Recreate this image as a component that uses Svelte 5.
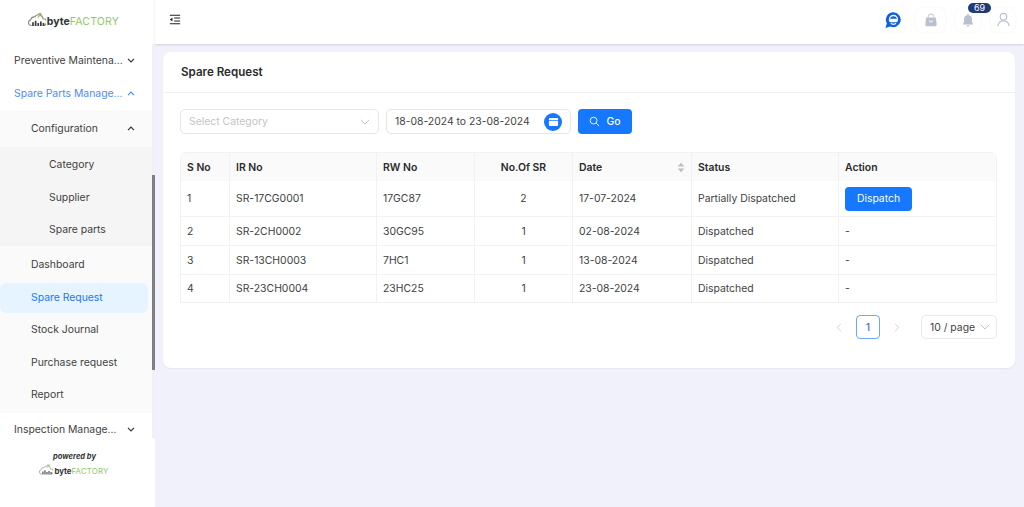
<script>
  const rows = [
    { no: 1, ir: "SR-17CG0001", rw: "17GC87", count: 2, date: "17-07-2024", status: "Partially Dispatched", action: true },
    { no: 2, ir: "SR-2CH0002", rw: "30GC95", count: 1, date: "02-08-2024", status: "Dispatched" },
    { no: 3, ir: "SR-13CH0003", rw: "7HC1", count: 1, date: "13-08-2024", status: "Dispatched" },
    { no: 4, ir: "SR-23CH0004", rw: "23HC25", count: 1, date: "23-08-2024", status: "Dispatched" },
  ];
</script>

{#snippet logo(cls)}
  <div class="logo {cls}">
    <svg viewBox="0 0 24 19" class="logo-mark">
      <path d="M5 17.5H4.500a3.800 3.800 0 0 1-.9-7.500A5 5 0 0 1 9 6a6 6 0 0 1 11 2.500 4.500 4.500 0 0 1 .5 9" fill="none" stroke="#8a8f8a" stroke-width="1.500" />
      <path d="M13 7 17.500 1.500M17.500 1.500h-3.500M17.500 1.500v3.500" fill="none" stroke="#8cc152" stroke-width="1.400" />
      <path d="M5.500 13h2.300v5H5.500zM9 11h2.300v7H9zM12.500 14h2.300v4h-2.300zM16 12h2.300v6H16zM19.500 14h2.300v4h-2.300z" fill="#3c3c3c" />
    </svg>
    <span class="byte">byte</span><span class="factory">FACTORY</span>
  </div>
{/snippet}

{#snippet chevron(up)}
  <svg class="chev" viewBox="0 0 10 6" class:up>
    <path d="M1.200 1 5 4.800 8.800 1" fill="none" stroke="currentColor" stroke-width="1.500" />
  </svg>
{/snippet}

<div class="app">
  <aside class="sidebar">
    <div class="brand">{@render logo("big")}</div>
    <div class="menu-wrap">
      <nav class="menu">
        <div class="item top">
          <span>Preventive Maintena...</span>{@render chevron(false)}
        </div>
        <div class="item top blue">
          <span>Spare Parts Manage...</span>{@render chevron(true)}
        </div>
        <div class="sub">
          <div class="item second cfg">
            <span>Configuration</span>{@render chevron(true)}
          </div>
          <div class="deep">
            <div class="item third">Category</div>
            <div class="item third">Supplier</div>
            <div class="item third">Spare parts</div>
          </div>
          <div class="item second dash">Dashboard</div>
          <div class="item second active">Spare Request</div>
          <div class="item second">Stock Journal</div>
          <div class="item second">Purchase request</div>
          <div class="item second">Report</div>
        </div>
        <div class="item top">
          <span>Inspection Manage...</span>{@render chevron(false)}
        </div>
      </nav>
      <div class="rail"><div class="thumb"></div></div>
    </div>
    <div class="powered">
      <div class="powered-by">powered by</div>
      {@render logo("small")}
    </div>
  </aside>

  <div class="main">
    <header class="topbar">
      <svg class="collapse" viewBox="0 0 14 12">
        <path d="M1 1h12M6 4.300h7M6 7.700h7M1 11h12" stroke="#222" stroke-width="1.200" fill="none" />
        <path d="M4 3.800v4.400L1 6z" fill="#222" />
      </svg>
      <div class="tools">
        <div class="tool">
          <svg viewBox="0 0 20 20" width="18" height="18">
            <path d="M10.500 1.500a8.200 8.200 0 1 1-3.400 15.700L1.500 18.800l1.700-5A8.200 8.200 0 0 1 10.500 1.500z" fill="#1060dc" />
            <path d="M6 9.500a4.500 4.500 0 0 1 9 0" fill="none" stroke="#fff" stroke-width="1.400" />
            <rect x="5.500" y="8.600" width="10" height="4" rx="2" fill="#fff" />
            <path d="M7.500 14c1.800 1 4.200 1 6 0" fill="none" stroke="#fff" stroke-width="1.300" />
          </svg>
        </div>
        <div class="tool">
          <svg viewBox="0 0 16 16" width="14" height="14">
            <path d="M5 5V4a3 3 0 0 1 6 0v1" fill="none" stroke="#b9c0d0" stroke-width="1.100" />
            <path d="M2.500 5h11l1 8.500a1.500 1.500 0 0 1-1.500 1.500H3a1.500 1.500 0 0 1-1.500-1.500z" fill="#b9c0d0" />
            <path d="M5.500 8.500 8 10.500l2.500-2" fill="none" stroke="#fff" stroke-width="1.100" />
          </svg>
        </div>
        <div class="tool">
          <span class="badge">69</span>
          <svg viewBox="0 0 16 16" width="14" height="14">
            <path d="M8 1a1 1 0 0 1 1 1v.6A4.600 4.600 0 0 1 12.600 7v3.500L14 13H2l1.400-2.500V7A4.600 4.600 0 0 1 7 2.600V2a1 1 0 0 1 1-1zM6.300 14h3.400a1.700 1.700 0 0 1-3.400 0z" fill="#b9c0d0" />
          </svg>
        </div>
        <div class="tool">
          <svg viewBox="0 0 16 16" width="15" height="15">
            <circle cx="8" cy="5" r="3.500" fill="none" stroke="#b9c0d0" stroke-width="1.200" />
            <path d="M2 15c.4-3.500 2.800-5.500 6-5.500s5.600 2 6 5.500" fill="none" stroke="#b9c0d0" stroke-width="1.200" />
          </svg>
        </div>
      </div>
    </header>

    <main class="content">
      <section class="card">
        <h1 class="card-title">Spare Request</h1>
        <div class="card-body">
          <div class="filters">
            <div class="field select">
              <span class="placeholder">Select Category</span>
              <svg class="down" viewBox="0 0 10 6"><path d="M.8.800 5 5 9.200.800" fill="none" stroke="#c4c4c4" stroke-width="1" /></svg>
            </div>
            <div class="field range">
              <span>18-08-2024 to 23-08-2024</span>
              <span class="cal">
                <svg viewBox="0 0 12 12" width="11" height="11">
                  <path d="M1 3.200a1 1 0 0 1 1-1h8a1 1 0 0 1 1 1V4.500H1zM1 5.500h10v4.300a1 1 0 0 1-1 1H2a1 1 0 0 1-1-1z" fill="#fff" />
                </svg>
              </span>
            </div>
            <button class="btn go">
              <svg viewBox="0 0 12 12" width="11" height="11">
                <circle cx="5" cy="5" r="3.700" fill="none" stroke="#fff" stroke-width="1" />
                <path d="m7.800 7.800 3.200 3.200" stroke="#fff" stroke-width="1" />
              </svg>
              Go
            </button>
          </div>

          <table>
            <thead>
              <tr>
                <th>S No</th>
                <th>IR No</th>
                <th>RW No</th>
                <th class="center">No.Of SR</th>
                <th>
                  <div class="sort-head">
                    Date
                    <svg viewBox="0 0 8 11" width="8" height="11">
                      <path d="M4 .800 7.400 4.500H.6z" fill="#bfbfbf" />
                      <path d="M4 10.200.6 6.500h6.800z" fill="#bfbfbf" />
                    </svg>
                  </div>
                </th>
                <th>Status</th>
                <th>Action</th>
              </tr>
            </thead>
            <tbody>
              {#each rows as r}
                <tr class:tall={r.action}>
                  <td>{r.no}</td>
                  <td>{r.ir}</td>
                  <td>{r.rw}</td>
                  <td class="center">{r.count}</td>
                  <td>{r.date}</td>
                  <td>{r.status}</td>
                  <td>
                    {#if r.action}
                      <button class="btn dispatch">Dispatch</button>
                    {:else}
                      -
                    {/if}
                  </td>
                </tr>
              {/each}
            </tbody>
          </table>

          <div class="pager">
            <svg class="arrow" viewBox="0 0 6 10"><path d="M5 1 1 5l4 4" fill="none" stroke="#c9c9c9" stroke-width="1" /></svg>
            <span class="page">1</span>
            <svg class="arrow" viewBox="0 0 6 10"><path d="m1 1 4 4-4 4" fill="none" stroke="#c9c9c9" stroke-width="1" /></svg>
            <div class="size">
              <span>10 / page</span>
              <svg class="down" viewBox="0 0 10 6"><path d="M.8.800 5 5 9.200.800" fill="none" stroke="#c4c4c4" stroke-width="1" /></svg>
            </div>
          </div>
        </div>
      </section>
    </main>
  </div>
</div>

<style>
  :global(body) {
    margin: 0;
    overflow: hidden;
    font-family: Inter, "Liberation Sans", sans-serif;
    font-size: 10.4px;
    color: #3f3f3f;
  }

  .app {
    display: flex;
    height: 507px;
    background: #f1f1fb;
  }

  /* sidebar */
  .sidebar {
    width: 155px;
    flex: none;
    background: #fff;
    display: flex;
    flex-direction: column;
  }

  .brand {
    height: 44px;
    box-sizing: border-box;
    padding: 11px 8px 0 0;
    display: flex;
    justify-content: center;
    align-items: flex-start;
  }

  .logo {
    display: flex;
    align-items: flex-end;
    white-space: nowrap;
  }

  .logo.big {
    font-size: 10.5px;
  }

  .logo.big .logo-mark {
    width: 18px;
    height: 17px;
    margin-right: 1px;
  }

  .logo.small {
    font-size: 7.8px;
    justify-content: center;
    padding-right: 7px;
    margin-top: 2px;
  }

  .logo.small .logo-mark {
    width: 14px;
    height: 13px;
    margin-right: 1px;
    opacity: 0.8;
  }

  .byte {
    font-weight: 700;
    color: #333;
  }

  .factory {
    color: #8fc866;
    letter-spacing: 0.2px;
  }

  .menu-wrap {
    display: flex;
    height: 394px;
    overflow: hidden;
  }

  .menu {
    width: 152px;
    flex: none;
  }

  .rail {
    width: 3px;
    background: #f1f1f1;
  }

  .thumb {
    margin-top: 131px;
    height: 195px;
    background: #7f7f7f;
  }

  .item {
    display: flex;
    align-items: center;
    justify-content: space-between;
    height: 32.5px;
    box-sizing: border-box;
    white-space: nowrap;
  }

  .item.top {
    padding: 0 17px 0 14px;
    height: 33px;
  }

  .item.blue {
    color: #4a8df8;
  }

  .sub {
    background: #fafafa;
    padding-bottom: 1.5px;
  }

  .item.second {
    padding: 0 17px 0 31px;
  }

  .item.cfg {
    height: 36.5px;
  }

  .deep {
    background: #f5f5f5;
    padding-top: 2px;
  }

  .item.third {
    padding-left: 49px;
  }

  .item.dash {
    margin-top: 2.5px;
  }

  .item.active {
    background: #e6f4ff;
    color: #1677ff;
    border-radius: 6px;
    margin: 2px 4px 1px 0;
    height: 29.5px;
  }

  .chev {
    width: 8px;
    height: 5px;
    color: #333;
    flex: none;
  }

  .chev.up {
    transform: rotate(180deg);
  }

  .blue .chev {
    color: #4a8df8;
  }

  .powered {
    padding-top: 14px;
    text-align: center;
  }

  .powered-by {
    font-size: 7.5px;
    font-weight: 700;
    font-style: italic;
    color: #333;
    padding-right: 6px;
  }

  /* header */
  .main {
    flex: 1;
    min-width: 0;
    display: flex;
    flex-direction: column;
  }

  .topbar {
    height: 44px;
    flex: none;
    box-sizing: border-box;
    background: #fff;
    box-shadow: 0 1px 2px rgba(60, 60, 90, 0.16);
    display: flex;
    align-items: center;
    justify-content: space-between;
    padding: 0 9px 5px 14px;
  }

  .collapse {
    width: 12px;
    height: 11px;
  }

  .tools {
    display: flex;
    gap: 11px;
  }

  .tool {
    position: relative;
    width: 24px;
    height: 24px;
    border-radius: 6px;
    background: #fff;
    box-shadow: 0 0 3px rgba(80, 80, 120, 0.07);
    display: flex;
    align-items: center;
    justify-content: center;
  }

  .tool:nth-child(2) {
    width: 29px;
  }

  .badge {
    position: absolute;
    top: -5px;
    left: 12px;
    width: 23px;
    height: 10px;
    line-height: 10px;
    text-align: center;
    border-radius: 6px;
    background: #1f3a78;
    color: #fff;
    font-size: 9px;
  }

  /* content */
  .content {
    flex: 1;
    padding: 8px 9px 0 8px;
  }

  .card {
    background: #fff;
    border-radius: 8px;
    height: 316px;
    box-shadow: 0 1px 2px rgba(60, 60, 90, 0.06);
  }

  .card-title {
    margin: 0;
    height: 41px;
    box-sizing: border-box;
    padding: 0 18px;
    line-height: 40px;
    font-size: 11.6px;
    font-weight: 600;
    color: #2b2b2b;
    border-bottom: 1px solid #f0f0f0;
  }

  .card-body {
    padding: 16px 18px 0 17px;
  }

  .filters {
    display: flex;
    gap: 7px;
    height: 25px;
    margin-bottom: 18px;
  }

  .field {
    box-sizing: border-box;
    border: 1px solid #e6e6e6;
    border-radius: 5px;
    display: flex;
    align-items: center;
    justify-content: space-between;
  }

  .select {
    width: 199px;
    padding: 0 8px;
  }

  .placeholder {
    color: #c4c4c4;
  }

  .down {
    width: 10px;
    height: 6px;
    flex: none;
  }

  .range {
    width: 185px;
    padding: 0 8px;
    color: #444;
  }

  .cal {
    width: 18px;
    height: 18px;
    border-radius: 50%;
    background: #1677ff;
    display: flex;
    align-items: center;
    justify-content: center;
  }

  .btn {
    border: 0;
    border-radius: 4px;
    background: #1677ff;
    color: #fff;
    font: inherit;
    padding: 0;
    display: flex;
    align-items: center;
    justify-content: center;
  }

  .go {
    width: 54px;
    gap: 6px;
    font-weight: 500;
  }

  table {
    width: 817px;
    table-layout: fixed;
    border-collapse: separate;
    border-spacing: 0;
    border: 1px solid #f2f2f2;
    border-bottom: 0;
    border-radius: 6px 6px 0 0;
    margin-bottom: 12px;
  }

  th,
  td {
    text-align: left;
    padding: 0 6px;
    border-bottom: 1px solid #f2f2f2;
    border-right: 1px solid #f2f2f2;
    box-sizing: border-box;
    font-size: 10.4px;
  }

  th:last-child,
  td:last-child {
    border-right: 0;
  }

  th {
    background: #fafafa;
    height: 28px;
    font-weight: 600;
    color: #2b2b2b;
    border-bottom: 0;
  }

  th:nth-child(1) { width: 49px; }
  th:nth-child(2) { width: 147px; }
  th:nth-child(3) { width: 98px; }
  th:nth-child(4) { width: 98px; }
  th:nth-child(5) { width: 119px; }
  th:nth-child(6) { width: 147px; }

  td {
    height: 29px;
  }

  tr:last-child td {
    height: 28px;
  }

  tr.tall td {
    height: 36px;
  }

  .center {
    text-align: center;
  }

  .sort-head {
    display: flex;
    align-items: center;
    justify-content: space-between;
  }

  .dispatch {
    width: 67px;
    height: 24px;
  }

  .pager {
    display: flex;
    align-items: center;
    justify-content: flex-end;
    height: 24px;
  }

  .arrow {
    width: 6px;
    height: 9px;
  }

  .page {
    width: 24px;
    height: 24px;
    box-sizing: border-box;
    margin: 0 14px;
    border: 1px solid #6aa9ff;
    border-radius: 4px;
    color: #3b6fe0;
    font-weight: 500;
    display: flex;
    align-items: center;
    justify-content: center;
  }

  .size {
    width: 76px;
    height: 24px;
    box-sizing: border-box;
    margin-left: 21px;
    padding: 0 6px 0 8px;
    border: 1px solid #eaeaea;
    border-radius: 5px;
    display: flex;
    align-items: center;
    justify-content: space-between;
  }
</style>
